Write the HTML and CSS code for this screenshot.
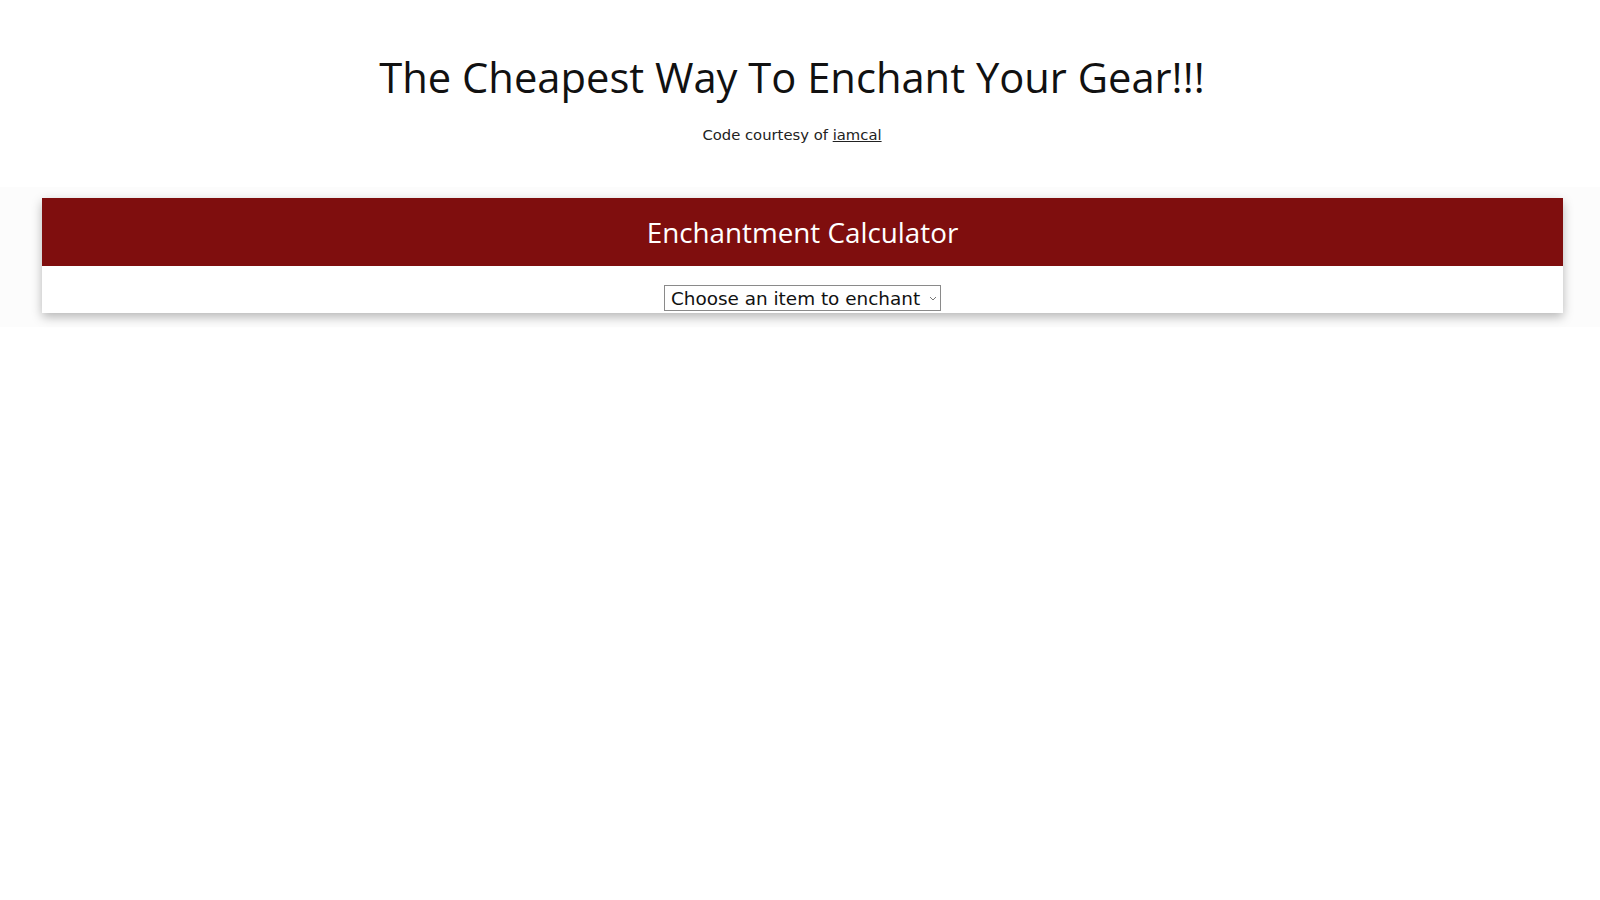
FILE: index.html
```html
<!DOCTYPE html>
<html lang="en">
<head>
<meta charset="utf-8">
<title>Enchantment Calculator</title>
<link rel="stylesheet" href="styles.css">
</head>
<body>
<header class="page-head">
  <h1 class="page-title">The Cheapest Way To Enchant Your Gear!!!</h1>
  <p class="credit">Code courtesy of <a class="credit-link" href="#">iamcal</a></p>
</header>
<section class="band">
  <div class="card">
    <div class="card-head">Enchantment Calculator</div>
    <div class="card-body">
      <div class="select-wrap">
        <select class="item-select">
          <option>Choose an item to enchant</option>
        </select>
        <svg class="chev" width="8" height="5" viewBox="0 0 8 5"><path d="M1 1 L4 4 L7 1" fill="none" stroke="#777" stroke-width="1"/></svg>
      </div>
    </div>
  </div>
</section>
</body>
</html>
```
FILE: styles.css
```css
html, body {
  margin: 0;
  padding: 0;
  background: #ffffff;
}
body {
  width: 1600px;
  height: 900px;
  overflow: hidden;
  font-family: "Open Sans", "Noto Sans", sans-serif;
  color: #111;
}
.page-head {
  padding: 52px 16px 0 0;
  text-align: center;
}
.page-title {
  margin: 0;
  font-family: "Open Sans", sans-serif;
  font-weight: 400;
  font-size: 41.7px;
  line-height: 50px;
  color: #111;
}
.credit {
  margin: 24px 0 0;
  font-family: "DejaVu Sans", Verdana, sans-serif;
  font-size: 14.8px;
  line-height: 18px;
  color: #222;
}
.credit-link {
  color: #222;
  text-decoration: underline;
}
.band {
  margin-top: 43px;
  padding: 11px 37px 14px 42px;
  background: #fcfcfc;
}
.card {
  background: #fff;
  box-shadow: 0 4px 10px rgba(0, 0, 0, 0.28);
}
.card-head {
  height: 68px;
  display: flex;
  align-items: center;
  justify-content: center;
  background: #7f0e0e;
  color: #fff;
  font-family: "Open Sans", sans-serif;
  font-size: 27.8px;
}
.card-body {
  display: flex;
  justify-content: center;
  padding: 19px 0 2px;
}
.select-wrap {
  position: relative;
  display: flex;
}
.item-select {
  appearance: none;
  -webkit-appearance: none;
  width: 277px;
  height: 26px;
  margin: 0;
  padding: 0 0 0 6px;
  border: 1px solid #8a8a8a;
  border-radius: 0;
  background: #fff;
  font-family: "DejaVu Sans", Verdana, sans-serif;
  font-size: 18.4px;
  color: #111;
}
.chev {
  position: absolute;
  right: 4px;
  top: 11px;
}
```
